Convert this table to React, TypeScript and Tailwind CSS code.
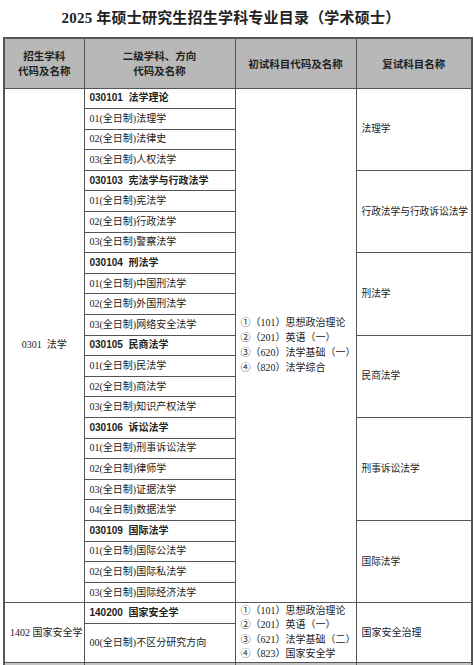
const serif = { fontFamily: '"Liberation Serif", "Noto Sans CJK SC", serif' };

interface Group {
  code: string;
  name: string;
  items: string[];
  retest: string;
}

const groups: Group[] = [
  { code: '030101', name: '法学理论', items: ['01(全日制)法理学', '02(全日制)法律史', '03(全日制)人权法学'], retest: '法理学' },
  { code: '030103', name: '宪法学与行政法学', items: ['01(全日制)宪法学', '02(全日制)行政法学', '03(全日制)警察法学'], retest: '行政法学与行政诉讼法学' },
  { code: '030104', name: '刑法学', items: ['01(全日制)中国刑法学', '02(全日制)外国刑法学', '03(全日制)网络安全法学'], retest: '刑法学' },
  { code: '030105', name: '民商法学', items: ['01(全日制)民法学', '02(全日制)商法学', '03(全日制)知识产权法学'], retest: '民商法学' },
  { code: '030106', name: '诉讼法学', items: ['01(全日制)刑事诉讼法学', '02(全日制)律师学', '03(全日制)证据法学', '04(全日制)数据法学'], retest: '刑事诉讼法学' },
  { code: '030109', name: '国际法学', items: ['01(全日制)国际公法学', '02(全日制)国际私法学', '03(全日制)国际经济法学'], retest: '国际法学' },
];

const lawExams = ['①（101）思想政治理论', '②（201）英语（一）', '③（620）法学基础（一）', '④（820）法学综合'];
const securityExams = ['①（101）思想政治理论', '②（201）英语（一）', '③（621）法学基础（二）', '④（823）国家安全学'];

const cell = 'border border-[#555] px-[5px] py-0 align-middle whitespace-nowrap';
const totalLawRows = groups.reduce((s, g) => s + g.items.length + 1, 0);

const App = () => {
  return (
    <div className="w-[474px] h-[665px] overflow-hidden bg-white text-[#222]" style={serif}>
      <div className="h-[37px] flex items-center justify-center pr-3">
        <h1 className="text-[15px] font-bold tracking-[0.2px]">2025 年硕士研究生招生学科专业目录（学术硕士）</h1>
      </div>

      <table className="ml-[3px] w-[468px] table-fixed border-collapse border-2 border-[#555] text-[10px] leading-none">
        <colgroup>
          <col className="w-[80px]" />
          <col className="w-[151px]" />
          <col className="w-[121px]" />
          <col className="w-[116px]" />
        </colgroup>
        <thead>
          <tr className="h-[50px] bg-[#b8b8b8] font-bold text-[10.5px] leading-[15px]" style={{ fontFamily: '"Noto Sans CJK SC", sans-serif' }}>
            <th className={cell + ' text-center'}>招生学科<br />代码及名称</th>
            <th className={cell + ' text-center'}>二级学科、方向<br />代码及名称</th>
            <th className={cell + ' text-center'}>初试科目代码及名称</th>
            <th className={cell + ' text-center'}>复试科目名称</th>
          </tr>
        </thead>
        <tbody>
          {groups.map((g, gi) => (
            <>
              <tr key={g.code} className="h-[20.6px]">
                {gi === 0 && (
                  <td rowSpan={totalLawRows} className={cell + ' text-center'}>0301&nbsp; 法学</td>
                )}
                <td className={cell + ' font-bold'} style={{ fontFamily: '"Liberation Sans", "Noto Sans CJK SC", sans-serif' }}>
                  {g.code}&nbsp; {g.name}
                </td>
                {gi === 0 && (
                  <td rowSpan={totalLawRows} className={cell + ' leading-[15px]'}>
                    {lawExams.map(e => <div key={e}>{e}</div>)}
                  </td>
                )}
                <td rowSpan={g.items.length + 1} className={cell + ' px-[4px] text-[9.7px]'}>{g.retest}</td>
              </tr>
              {g.items.map(item => (
                <tr key={item} className="h-[20.6px]">
                  <td className={cell}>{item}</td>
                </tr>
              ))}
            </>
          ))}
          <tr className="h-[21px]">
            <td rowSpan={2} className={cell + ' px-[4px] text-left'}>1402 国家安全学</td>
            <td className={cell + ' font-bold'} style={{ fontFamily: '"Liberation Sans", "Noto Sans CJK SC", sans-serif' }}>
              140200&nbsp; 国家安全学
            </td>
            <td rowSpan={2} className={cell + ' leading-[14.5px]'}>
              {securityExams.map(e => <div key={e}>{e}</div>)}
            </td>
            <td rowSpan={2} className={cell + ' px-[4px]'}>国家安全治理</td>
          </tr>
          <tr className="h-[39px]">
            <td className={cell}>00(全日制)不区分研究方向</td>
          </tr>
          <tr className="h-[20px] bg-[#c4c4c4]">
            <td className={cell} />
            <td className={cell} />
            <td className={cell} />
            <td className={cell} />
          </tr>
        </tbody>
      </table>
    </div>
  );
};

export default App;
